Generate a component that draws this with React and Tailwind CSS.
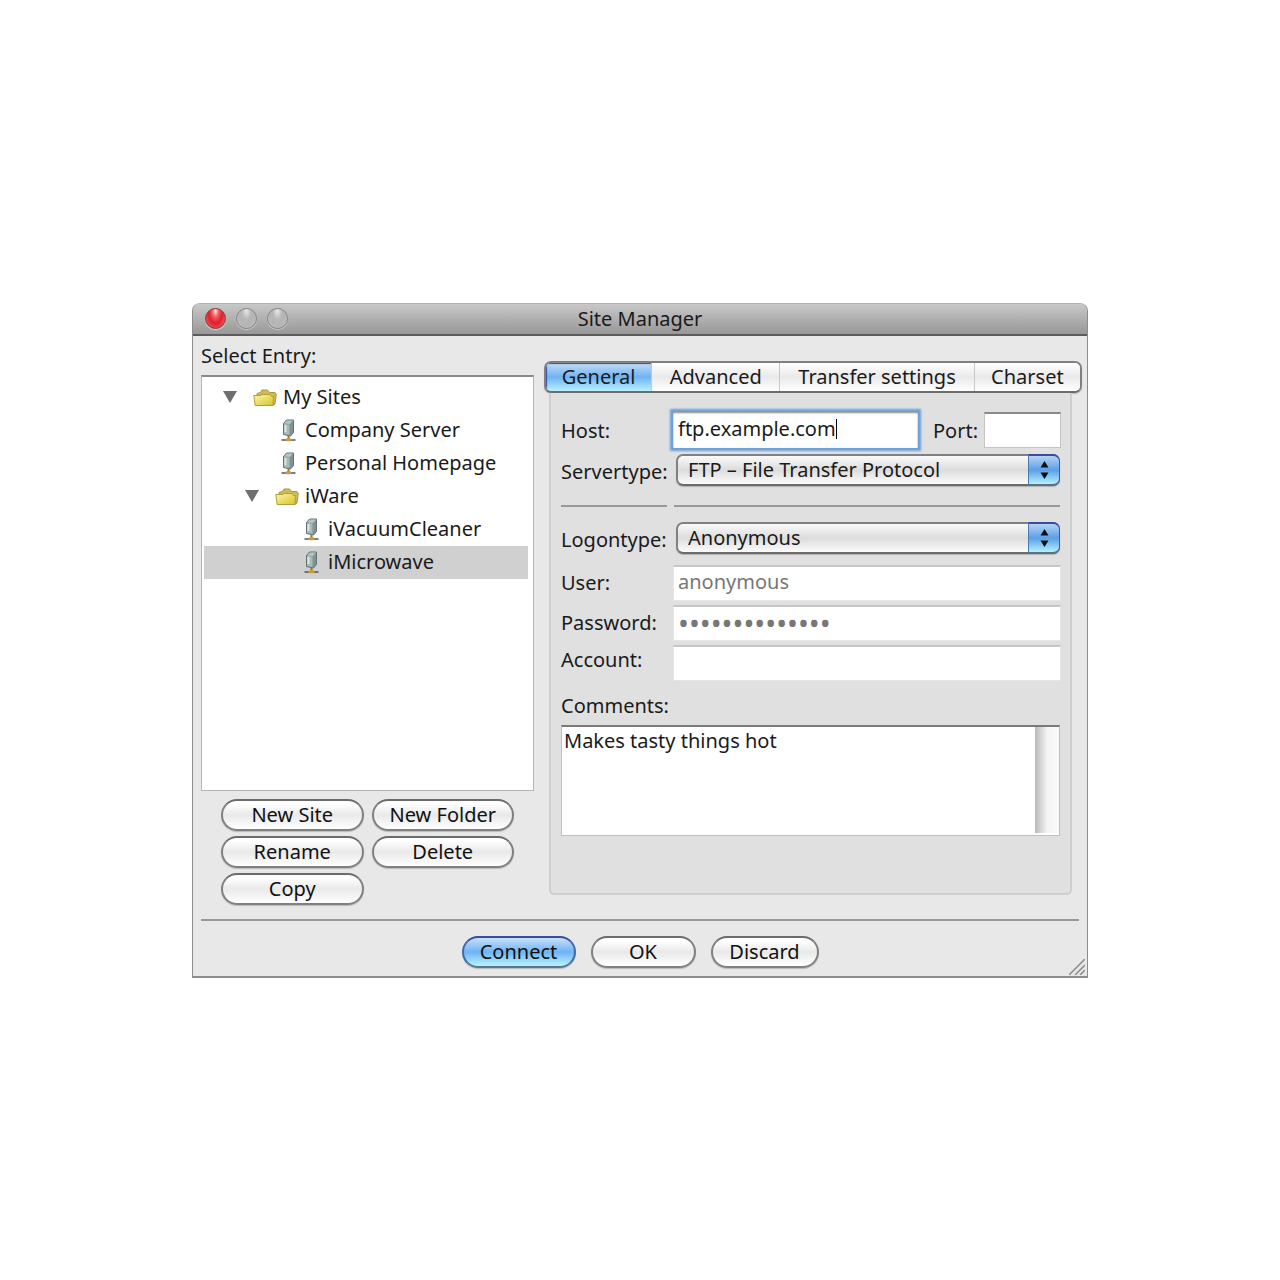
import React from "react";

const FONT = "font-['Noto_Sans',sans-serif]";

function Folder() {
  return (
    <svg className="h-[19px] w-6 shrink-0" viewBox="0 0 24 19" aria-hidden="true">
      <defs>
        <linearGradient id="folder-front" x1="0" y1="0" x2="1" y2="1">
          <stop offset="0" stopColor="#fbf5b4" />
          <stop offset="0.5" stopColor="#ecdd62" />
          <stop offset="1" stopColor="#d3bf3c" />
        </linearGradient>
      </defs>
      <path d="M4 8V5.500L7.500 4.500L9 2H14.500L16.500 4.500H22L23.300 6.500L22 16L20 17.300Z" fill="#cdbb55" stroke="#a9963e" strokeWidth="1" strokeLinejoin="round" />
      <path d="M0.800 7.500H7.500L9 6.500H17L18.500 8.500H20.500L20 17.500H2.200Z" fill="url(#folder-front)" stroke="#b29d3c" strokeWidth="1" strokeLinejoin="round" />
    </svg>
  );
}

function Server() {
  return (
    <svg className="h-[23px] w-[15px] shrink-0" viewBox="0 0 15 23" aria-hidden="true">
      <path d="M2.500 4.500L5.500 1H12.500V13.500L9.500 17L2.500 15.500Z" fill="#7f9392" stroke="#617473" strokeWidth="1" strokeLinejoin="round" />
      <path d="M3 4.500L6 1.500H12L9 5Z" fill="#b5c5c4" />
      <path d="M3 5L8.500 5.500V16L3 15Z" fill="#a9bab9" />
      <path d="M4.500 6V13" stroke="#dbe8e6" strokeWidth="2" />
      <path d="M7.500 17V20" stroke="#9b7730" strokeWidth="2" />
      <path d="M0.500 21H14.500" stroke="#555" strokeWidth="1.500" />
      <path d="M4 21L6 19H9L11 21L9 22.300H6Z" fill="#c79a3c" />
    </svg>
  );
}

function Triangle() {
  return (
    <svg className="h-3 w-[14px] shrink-0" viewBox="0 0 14 12" aria-hidden="true">
      <path d="M0 0H14L7 12Z" fill="#6f6f6f" />
    </svg>
  );
}

function FolderRow({ label, indent }) {
  return (
    <li className={`flex h-[33px] items-center ${indent}`}>
      <button type="button" aria-label={`Collapse ${label}`} className="mr-4 flex">
        <Triangle />
      </button>
      <Folder />
      <span className="ml-[6px]">{label}</span>
    </li>
  );
}

function SiteRow({ label, indent, selected }) {
  return (
    <li className={`flex h-[33px] items-center ${indent} ${selected ? "bg-[#d0d0d0]" : ""}`}>
      <Server />
      <span className="ml-[9px]">{label}</span>
    </li>
  );
}

const PILL =
  "flex h-8 items-center justify-center rounded-full border-2 text-[20px] leading-[26px] text-[#111] shadow-[0_1px_1px_rgba(0,0,0,0.2)]";
const PLAIN =
  "border-[#808080] border-t-[#6c6c6c] bg-linear-to-b from-white from-10% via-[#e9e9e9] via-50% to-white";

function PillButton({ children, className = "" }) {
  return (
    <button type="button" className={`${PILL} ${PLAIN} ${className}`}>
      {children}
    </button>
  );
}

function Stepper() {
  return (
    <span className="pointer-events-none absolute inset-y-0 right-0 flex w-8 items-center justify-center rounded-r-[7px] border border-t-2 border-b-2 border-[#4a78b0] border-t-[#3c4aa0] border-r-[#3f55a5] border-b-[#5a7184] bg-linear-to-b from-[#b5d3f2] via-[#5a9fe6] via-50% to-[#b4f0ff]">
      <svg className="h-[18px] w-[9px]" viewBox="0 0 9 18" aria-hidden="true">
        <path d="M4.500 0L8.500 6.500H0.500ZM4.500 18L0.500 11.500H8.500Z" fill="#111" />
      </svg>
    </span>
  );
}

function Popup({ id, options }) {
  return (
    <div className="relative mr-px ml-[3px] min-w-0 flex-1">
      <select
        id={id}
        className="block h-8 w-full appearance-none rounded-[7px] border-2 border-[#808080] border-b-[#6c6c6c] bg-linear-to-b from-[#fafafa] via-[#dcdcdc] via-50% to-[#fcfcfc] pr-9 pl-[10px] text-[20px] leading-[26px] text-[#1a1a1a] shadow-[0_1px_1px_rgba(0,0,0,0.2)]"
      >
        {options.map((o) => (
          <option key={o}>{o}</option>
        ))}
      </select>
      <Stepper />
    </div>
  );
}

function Field({ id, label, className = "", labelClass = "", children }) {
  return (
    <div className={`flex items-center ${className}`}>
      <label htmlFor={id} className={`w-[112px] shrink-0 leading-[26px] ${labelClass}`}>
        {label}
      </label>
      {children}
    </div>
  );
}

const DIM = "h-9 w-full min-w-0 flex-1 border-t-2 border-t-[#c6c6c6] border-x border-b border-x-[#e6e6e6] border-b-[#e6e6e6] bg-white px-[4px] text-[#777]";

const TABS = ["General", "Advanced", "Transfer settings", "Charset"];

export default function App() {
  return (
    <div className={`flex min-h-screen items-center justify-center bg-white text-[20px] text-[#1a1a1a] ${FONT}`}>
      <main className="w-full max-w-4xl overflow-hidden rounded-t-[8px] border border-[#8c8c8c] border-b-2 border-t-[#b0b0b0] bg-[#e8e8e8]">
        <header className="grid h-8 grid-cols-[1fr_auto_1fr] items-center border-b-2 border-[#5c5c5c] bg-linear-to-b from-[#c8c8c8] to-[#989898] px-3">
          <div className="flex gap-[10px]">
            <button type="button" aria-label="Close" className="size-[21px] rounded-full border border-[#8a3a3a] bg-[radial-gradient(ellipse_at_50%_12%,#ffe4e4_0%,#ee6a6a_22%,#e01f2b_50%,#f0555a_85%,#a02028_100%)] shadow-[0_1px_1px_#ddd]" />
            <button type="button" aria-label="Minimize" className="size-[21px] rounded-full border border-[#858585] bg-[radial-gradient(ellipse_at_50%_10%,#e8e8e8_0%,#b8b8b8_35%,#b4b4b4_60%,#cacaca_100%)] shadow-[0_1px_1px_#ccc]" />
            <button type="button" aria-label="Zoom" className="size-[21px] rounded-full border border-[#858585] bg-[radial-gradient(ellipse_at_50%_10%,#e8e8e8_0%,#b8b8b8_35%,#b4b4b4_60%,#cacaca_100%)] shadow-[0_1px_1px_#ccc]" />
          </div>
          <h1 className="leading-[26px]">Site Manager</h1>
          <span />
        </header>

        <div className="grid grid-cols-[333fr_538fr] gap-[10px] pr-[5px] pl-2">
          <section className="flex flex-col pt-[7px]">
            <h2 id="entries" className="leading-[26px]">Select Entry:</h2>
            <ul aria-labelledby="entries" className="mt-[6px] flex-1 border border-t-2 border-[#b5b5b5] border-t-[#8a8a8a] bg-white pt-1 pr-[5px] pl-[2px] leading-[26px]">
              <FolderRow label="My Sites" indent="pl-[19px]" />
              <SiteRow label="Company Server" indent="pl-[77px]" />
              <SiteRow label="Personal Homepage" indent="pl-[77px]" />
              <FolderRow label="iWare" indent="pl-[41px]" />
              <SiteRow label="iVacuumCleaner" indent="pl-[100px]" />
              <SiteRow label="iMicrowave" indent="pl-[100px]" selected />
            </ul>
            <div className="grid grid-cols-2 gap-x-2 gap-y-[5px] px-5 pt-2 pb-[14px]">
              <PillButton>New Site</PillButton>
              <PillButton>New Folder</PillButton>
              <PillButton>Rename</PillButton>
              <PillButton>Delete</PillButton>
              <PillButton>Copy</PillButton>
            </div>
          </section>

          <section className="flex flex-col pt-[25px] pb-6">
            <div role="tablist" className="grid h-8 grid-cols-[106fr_129fr_196fr_107fr] overflow-hidden rounded-[7px] border-2 border-[#808080] border-b-[#6c6c6c] shadow-[0_1px_1px_rgba(0,0,0,0.2)]">
              {TABS.map((t, i) => (
                <button
                  key={t}
                  type="button"
                  role="tab"
                  aria-selected={i === 0}
                  className={
                    i === 0
                      ? "bg-linear-to-b from-[#c3dcf5] via-[#6fb2f3] via-50% to-[#b8f2ff] leading-[26px] shadow-[inset_1px_1px_1px_#3c4aa0]"
                      : "border-l border-[#c8c8c8] bg-linear-to-b from-white via-[#e9e9e9] via-50% to-white leading-[26px]"
                  }
                >
                  {t}
                </button>
              ))}
            </div>
            <div role="tabpanel" className="mr-[10px] ml-[5px] flex-1 rounded-b-[5px] border-2 border-t-0 border-[#cecece] bg-[#e0e0e0] pt-[19px] pr-[9px] pl-[10px]">
              <Field id="host" label="Host:" labelClass="pt-[2px]">
                <div className="relative min-w-0 flex-1">
                  <input id="host" defaultValue="ftp.example.com" className="block h-9 w-full bg-white px-[5px] pb-[2px] shadow-[inset_0_1px_2px_#888,0_0_2px_3px_#6d9fd8] outline-none" />
                  <span className="absolute top-[7px] left-[163px] h-5 w-px bg-black" />
                </div>
                <label htmlFor="port" className="ml-[15px] w-[51px] pt-[2px] leading-[26px]">Port:</label>
                <input id="port" className="h-9 w-[77px] border border-t-2 border-[#c4c4c4] border-t-[#8a8a8a] bg-white px-[4px]" />
              </Field>
              <Field id="servertype" label="Servertype:" className="mt-[6px]" labelClass="pt-1">
                <Popup id="servertype" options={["FTP – File Transfer Protocol"]} />
              </Field>
              <div className="mt-[19px] mb-[15px] flex gap-[7px]">
                <hr className="w-[106px] border-t-2 border-[#999]" />
                <hr className="mr-px flex-1 border-t-2 border-[#999]" />
              </div>
              <Field id="logontype" label="Logontype:" labelClass="pt-1">
                <Popup id="logontype" options={["Anonymous"]} />
              </Field>
              <Field id="user" label="User:" className="mt-[11px]">
                <input id="user" defaultValue="anonymous" className={`${DIM} pb-1`} />
              </Field>
              <Field id="password" label="Password:" className="mt-1">
                <input id="password" type="password" defaultValue="anonymous12345" className={`${DIM} text-[29px]`} />
              </Field>
              <Field id="account" label="Account:" className="mt-1" labelClass="pb-[6px]">
                <input id="account" className={DIM} />
              </Field>
              <label htmlFor="comments" className="mt-3 block leading-[26px]">Comments:</label>
              <div className="mt-[6px] mr-px mb-[57px] flex border border-t-2 border-[#c0c0c0] border-t-[#7a7a7a] bg-white">
                <textarea id="comments" defaultValue="Makes tasty things hot" className="block h-[108px] min-w-0 flex-1 resize-none px-[2px] pt-px leading-[26px] outline-none" />
                <span className="mb-[2px] w-6 bg-linear-to-r from-[#b8b8b8] via-[#f4f4f4] via-50% to-[#fafafa]" />
              </div>
            </div>
          </section>
        </div>

        <footer className="relative mr-2 ml-2 border-t-2 border-[#999] pt-[15px] pb-2">
          <div className="flex justify-center gap-[15px]">
            <button type="button" className={`${PILL} w-[114px] border-[#3f6aa8] border-t-[#3c4aa0] border-b-[#56788f] bg-linear-to-b from-[#c8e0fa] via-[#6fb2f5] via-50% to-[#b8f4ff]`}>
              Connect
            </button>
            <PillButton className="w-[105px]">OK</PillButton>
            <PillButton className="w-[108px]">Discard</PillButton>
          </div>
          <svg className="absolute -right-[6px] bottom-px size-4" viewBox="0 0 16 16" aria-hidden="true">
            <path d="M0 16L16 0M6 16L16 6M11 16L16 11" stroke="#888" strokeWidth="1.500" fill="none" />
          </svg>
        </footer>
      </main>
    </div>
  );
}
